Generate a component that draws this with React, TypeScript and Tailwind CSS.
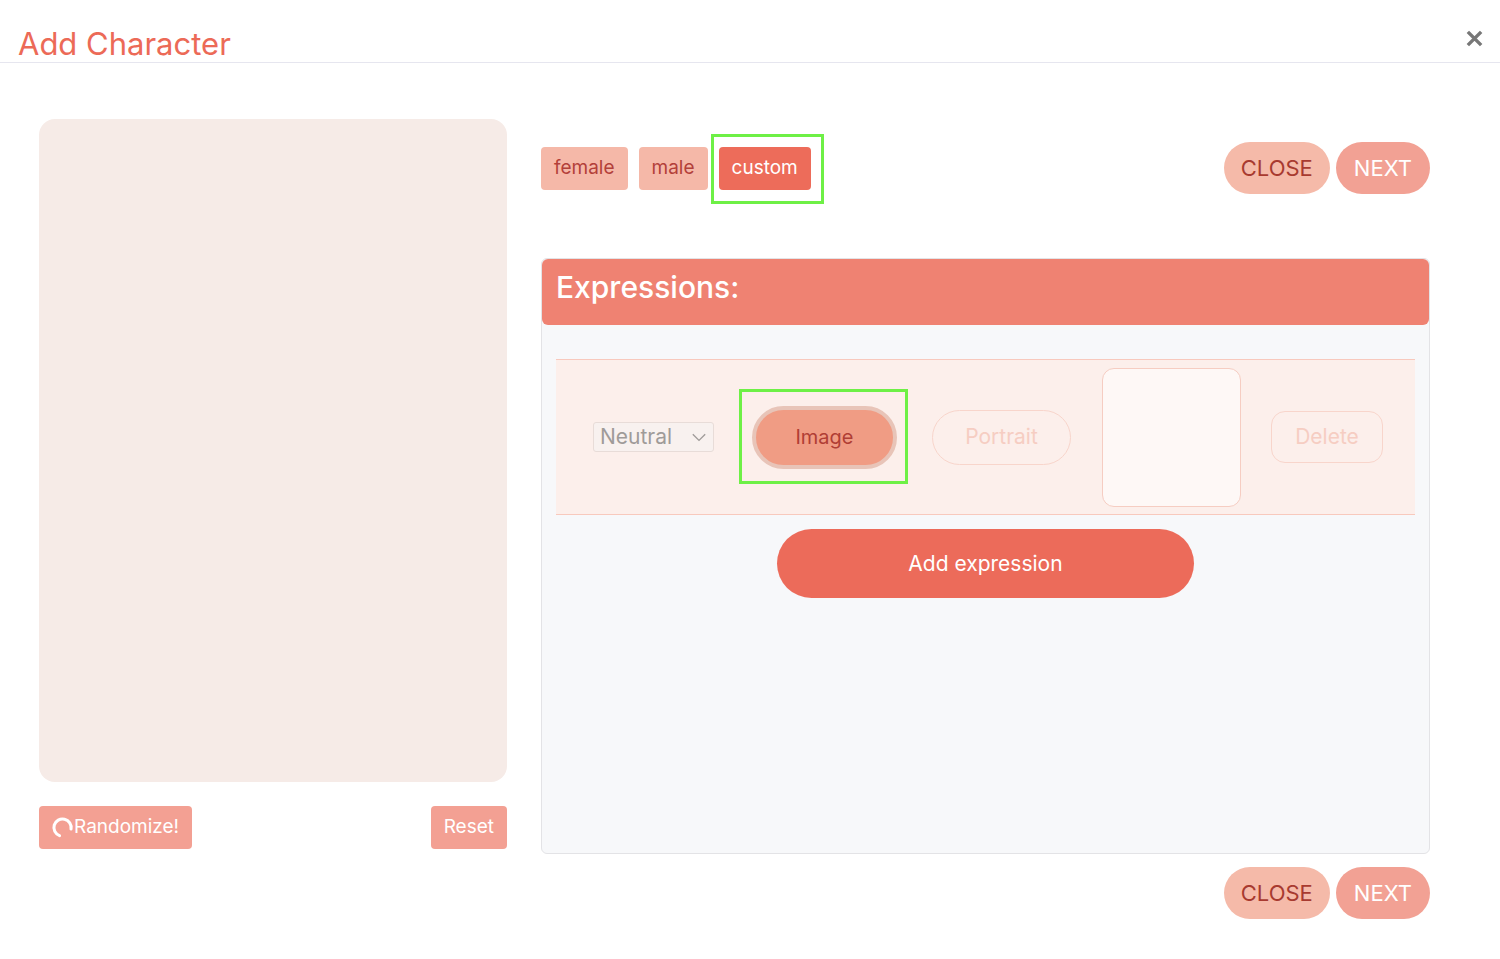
import React from 'react'

const font = "font-['Inter','Noto_Sans','Liberation_Sans',sans-serif]"

function Highlight({ className }: { className: string }) {
    // green annotation frame drawn over the wrapped control
    return <span className={'pointer-events-none absolute border-[3px] border-[#6ef046] ' + className} />
}

export default function App() {
    return (
        <div className={'min-h-screen bg-white ' + font}>
            {/* header */}
            <div className="flex h-[63px] items-start justify-between border-b border-[#e6e6ef]">
                <h1 className="ml-[18px] mt-[25px] text-[31px] leading-[37px] font-normal text-[#ec6a57]">Add Character</h1>
                <button className="mr-[16px] mt-[29px] text-[#777777]">
                    <svg viewBox="0 0 20 20" className="size-[19px]" fill="none" stroke="currentColor" strokeWidth={3.6}>
                        <path d="M3 3 17 17M17 3 3 17" />
                    </svg>
                </button>
            </div>

            <div className="flex px-[39px] pt-[56px]">
                {/* preview column */}
                <div className="w-[468px] shrink-0">
                    <div className="h-[663px] rounded-[16px] bg-[#f6ebe7]" />
                    <div className="mt-[24px] flex justify-between">
                        <button className="flex h-[43px] items-center rounded-[4px] bg-[#f3a093] pl-[12px] pr-[13px] text-[19px] text-white">
                            <svg viewBox="0 0 24 24" className="size-[23px]" fill="none" stroke="currentColor" strokeWidth={3.2} strokeLinecap="round">
                                <path d="M8.9 20.5A9 9 0 1 1 20.9 13.6" />
                            </svg>
                            Randomize!
                        </button>
                        <button className="h-[43px] rounded-[4px] bg-[#f3a093] px-[13px] text-[19px] text-white">Reset</button>
                    </div>
                </div>

                {/* editor column */}
                <div className="ml-[34px] w-[889px] shrink-0">
                    <div className="mt-[23px] flex h-[52px] items-center justify-between">
                        <div className="flex items-center gap-[11px]">
                            <button className="h-[43px] rounded-[4px] bg-[#f5b8a8] px-[13px] text-[19px] text-[#b3403a]">female</button>
                            <button className="h-[43px] rounded-[4px] bg-[#f5b8a8] px-[13px] text-[19px] text-[#b3403a]">male</button>
                            <div className="relative">
                                <button className="h-[43px] rounded-[4px] bg-[#ed6c5a] px-[13px] text-[19px] text-white">custom</button>
                                <Highlight className="-left-[8px] -top-[13px] -right-[13px] -bottom-[14px]" />
                            </div>
                        </div>
                        <div className="flex gap-[6px]">
                            <button className="h-[52px] rounded-full bg-[#f5baa9] px-[17px] text-[22px] text-[#a83a30]">CLOSE</button>
                            <button className="h-[52px] rounded-full bg-[#f2a194] px-[18px] text-[22px] text-white">NEXT</button>
                        </div>
                    </div>

                    {/* expressions panel */}
                    <div className="mt-[64px] h-[596px] rounded-[6px] border border-[#e3e3e6] bg-[#f7f8fa]">
                        <div className="h-[66px] rounded-[6px] bg-[#ef8272] pl-[14px] pt-[10px]">
                            <h2 className="text-[30px] leading-[36px] font-medium text-white">Expressions:</h2>
                        </div>

                        <div className="mx-[14px] mt-[34px] flex h-[156px] items-center border-y border-[#f8c9bd] bg-[#fcefeb]">
                            <div className="ml-[37px] flex h-[30px] w-[121px] items-center justify-between rounded-[3px] border border-[#e8dcd8] bg-[#f8f1ef] pl-[6px] pr-[5px] text-[21px] text-[#9f9b99]">
                                <span>Neutral</span>
                                <svg viewBox="0 0 16 16" className="size-[18px]" fill="none" stroke="currentColor" strokeWidth={1.2}>
                                    <path d="M2.5 5.5 8 11 13.5 5.5" />
                                </svg>
                            </div>
                            <div className="relative ml-[38px]">
                                <button className="h-[63px] w-[145px] rounded-full border-[4px] border-[#e8c4b8] bg-[#f09c84] text-[20px] text-[#b03e35]">Image</button>
                                <Highlight className="-left-[13px] -top-[17px] -right-[11px] -bottom-[15px]" />
                            </div>
                            <button className="ml-[35px] h-[55px] w-[139px] rounded-full border border-[#f8d5cb] text-[21px] text-[#f6cdc2]">Portrait</button>
                            <div className="ml-[31px] h-[139px] w-[139px] rounded-[12px] border border-[#f6cdc2] bg-[#fef8f6]" />
                            <button className="ml-[30px] h-[52px] w-[112px] rounded-[14px] border border-[#f8d5cb] text-[21px] text-[#f6cdc2]">Delete</button>
                        </div>

                        <button className="mx-auto mt-[14px] block h-[69px] w-[417px] rounded-full bg-[#ec6b5a] text-[21px] text-white">Add expression</button>
                    </div>

                    <div className="mt-[13px] flex justify-end gap-[6px]">
                        <button className="h-[52px] rounded-full bg-[#f5baa9] px-[17px] text-[22px] text-[#a83a30]">CLOSE</button>
                        <button className="h-[52px] rounded-full bg-[#f2a194] px-[18px] text-[22px] text-white">NEXT</button>
                    </div>
                </div>
            </div>
        </div>
    )
}
